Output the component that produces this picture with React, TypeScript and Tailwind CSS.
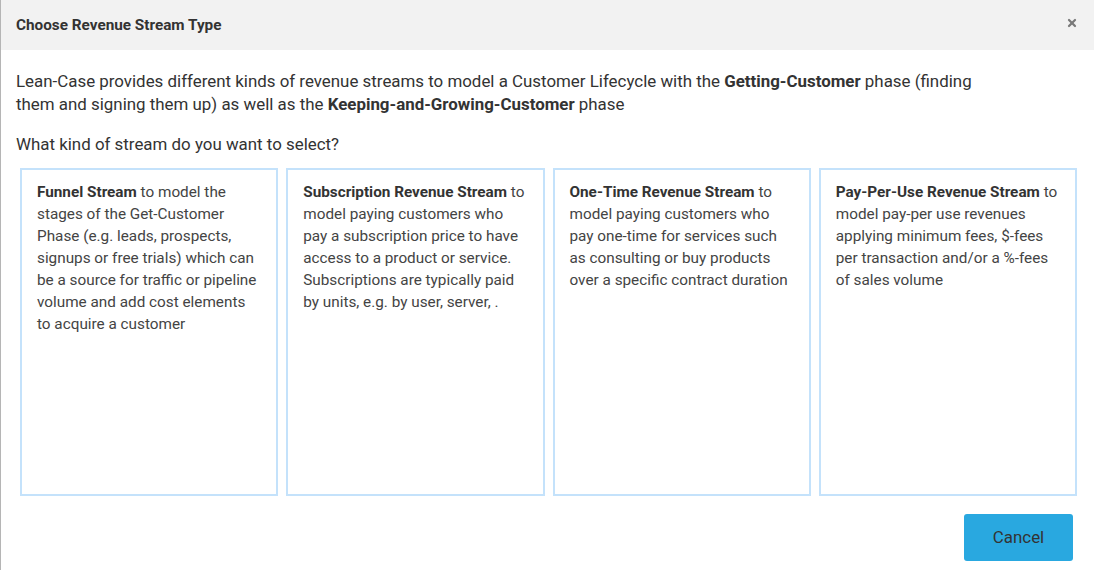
import { X } from "lucide-react";

type StreamOption = {
  title: string;
  text: string;
};

const streams: StreamOption[] = [
  {
    title: "Funnel Stream",
    text: "to model the stages of the Get-Customer Phase (e.g. leads, prospects, signups or free trials) which can be a source for traffic or pipeline volume and add cost elements to acquire a customer",
  },
  {
    title: "Subscription Revenue Stream",
    text: "to model paying customers who pay a subscription price to have access to a product or service. Subscriptions are typically paid by units, e.g. by user, server, .",
  },
  {
    title: "One-Time Revenue Stream",
    text: "to model paying customers who pay one-time for services such as consulting or buy products over a specific contract duration",
  },
  {
    title: "Pay-Per-Use Revenue Stream",
    text: "to model pay-per use revenues applying minimum fees, $-fees per transaction and/or a %-fees of sales volume",
  },
];

export default function App() {
  return (
    <div
      className="h-[570px] w-[1094px] overflow-hidden border-l border-[#b5b5b5] bg-white text-[#333]"
      style={{ fontFamily: "Roboto, 'Liberation Sans', sans-serif" }}
    >
      <div className="flex h-[50px] items-center justify-between bg-[#f2f2f2] pl-[15px] pr-[16px]">
        <h4 className="text-[15.3px] font-bold text-[#333]">Choose Revenue Stream Type</h4>
        <button className="mt-[-4px] text-[#7a7a7a]">
          <X size={12} strokeWidth={4.5} />
        </button>
      </div>

      <div className="px-[15px] pt-[20px]">
        <p className="max-w-[975px] text-[16.9px] leading-[23px]">
          Lean-Case provides different kinds of revenue streams to model a Customer Lifecycle with the{" "}
          <b>Getting-Customer</b> phase (finding them and signing them up) as well as the{" "}
          <b>Keeping-and-Growing-Customer</b> phase
        </p>
        <p className="mt-[17px] text-[16.9px] leading-[23px]">What kind of stream do you want to select?</p>

        <div className="mt-[12px] grid grid-cols-4 gap-[8px] pl-[4px] pr-[2px]">
          {streams.map((stream) => (
            <div
              key={stream.title}
              className="h-[328px] cursor-pointer border-2 border-[#c4e2fb] px-[15px] pt-[11px] text-[15.3px] leading-[22px] text-[#444]"
            >
              <b className="text-[#333]">{stream.title}</b> {stream.text}
            </div>
          ))}
        </div>

        <div className="mt-[18px] flex justify-end pr-[6px]">
          <button className="h-[47px] w-[109px] rounded-[3px] bg-[#29a8e0] text-[16.9px] text-[#333]">
            Cancel
          </button>
        </div>
      </div>
    </div>
  );
}
